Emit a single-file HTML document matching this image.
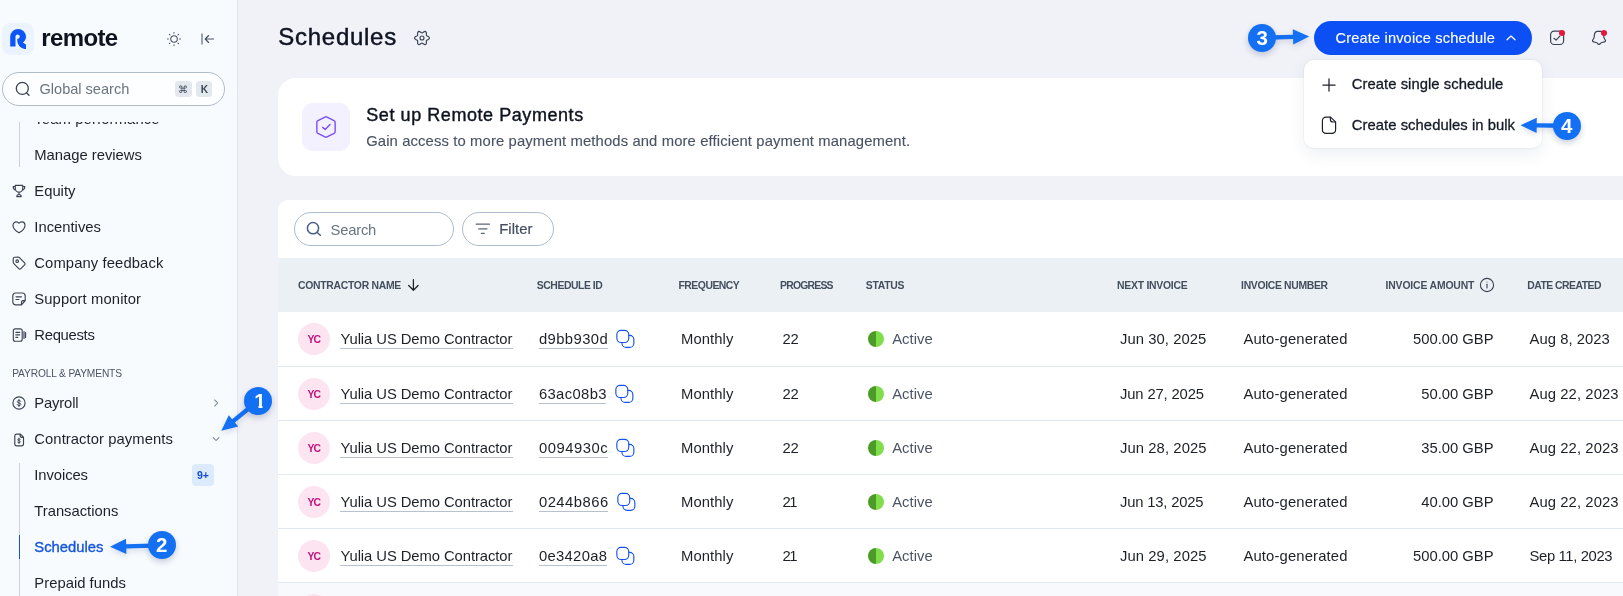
<!DOCTYPE html>
<html lang="en"><head><meta charset="utf-8"><title>Schedules</title>
<style>
*{box-sizing:border-box;margin:0;padding:0}
html,body{width:1623px;height:596px;overflow:hidden;background:#f1f2f8}
body{font-family:"Liberation Sans",sans-serif;position:relative}
#w{position:absolute;left:0;top:0;width:1623px;height:596px;overflow:hidden;will-change:transform}
.t{position:absolute;white-space:pre}
.a{position:absolute}
svg{position:absolute;overflow:visible}
#side{position:absolute;left:0;top:0;width:237px;height:596px;background:#f8fbfe}
#sideb{position:absolute;left:236.700px;top:0;width:1.300px;height:596px;background:#dfe5ec}
#nav{position:absolute;left:0;top:121.5px;width:237px;height:475px;overflow:hidden}
#nav>div{position:absolute;left:0;top:-121.5px;width:237px;height:596px}
.kbd{position:absolute;background:#e3e8ef;border-radius:3.5px}
.card{position:absolute;background:#fff}
.pill{position:absolute;border:1px solid #afbccd;border-radius:17px;background:#fff}
.hl{position:absolute;height:1px;background:#e2e8f0}
.ul{position:absolute;height:1px;background:#b7c0cd}
.av{position:absolute;width:32px;height:32px;border-radius:16px;background:#fce4f1}
.badge{position:absolute;width:28.1px;height:28.1px;border-radius:15px;background:#1470f2;box-shadow:0 3px 6px rgba(20,40,90,.22)}
</style></head>
<body>
<div id="w">
<div id="side"></div><div id="sideb"></div>
<div class="a" style="left:2px;top:23px;width:32.4px;height:32px;border-radius:8.5px;background:#ebf3fe"></div>
<svg style="left:0;top:0" width="60" height="60" viewBox="0 0 60 60"><path fill="#0d55f5" d="M10.2 46.6V36.8a7.9 7.9 0 0 1 15.8 0c0 2.600-1.300 4.500-3.200 5.600L26 44.600V49l-1.600-.1c-2.600-.6-4.700-2.100-5.900-4.200-.9-1.500-1.200-3-1.200-4.200V38.720A2.150 2.150 0 1 0 15.500 36.600V46.600Z"/></svg>
<span class="t" style="left:41.30px;top:27.50px;font-size:24px;line-height:20px;color:#0e1320;font-weight:700;letter-spacing:-0.626px;">remote</span>
<svg style="left:165px;top:30px" width="18" height="18" viewBox="0 0 18 18" fill="none" stroke="#465060" stroke-width="1.05" stroke-linecap="round"><circle cx="9" cy="9" r="3.3"/><path d="M14.70 9.00L15.50 9.00"/><path d="M13.03 13.03L13.60 13.60"/><path d="M9.00 14.70L9.00 15.50"/><path d="M4.97 13.03L4.40 13.60"/><path d="M3.30 9.00L2.50 9.00"/><path d="M4.97 4.97L4.40 4.40"/><path d="M9.00 3.30L9.00 2.50"/><path d="M13.03 4.97L13.60 4.40"/></svg>
<svg style="left:198px;top:30px" width="18" height="18" viewBox="0 0 18 18" fill="none" stroke="#465060" stroke-width="1.150" stroke-linecap="round" stroke-linejoin="round"><path d="M4 3.400V14.600" stroke="#8a94a2" stroke-width="1.700" stroke-linecap="butt"/><path d="M15.600 9H7.400M10.600 5.500L7.200 9l3.400 3.500"/></svg>
<div class="pill" style="left:2px;top:72px;width:223px;height:34px;border-color:#b1bccb;background:#fdfeff"></div>
<svg style="left:14px;top:80px" width="18" height="18" viewBox="0 0 18 18" fill="none" stroke="#3a4352" stroke-width="1.3" stroke-linecap="round"><circle cx="8.300" cy="8.400" r="6"/><path d="M12.700 13l2.300 2.300"/></svg>
<span class="t" style="left:39.50px;top:79.00px;font-size:14.6px;line-height:20px;color:#6a757f;letter-spacing:-0.021px;">Global search</span>
<div class="kbd" style="left:175.2px;top:81px;width:16.5px;height:15.600px"></div>
<div class="kbd" style="left:196.300px;top:81px;width:15.600px;height:15.600px"></div>
<span class="t" style="left:178.30px;top:79.50px;font-size:10px;line-height:20px;color:#3d4757;font-family:"DejaVu Sans",sans-serif;transform:scale(.92,1.12);transform-origin:50% 78%;-webkit-text-stroke:.25px #3d4757;">⌘</span>
<span class="t" style="left:200.70px;top:79.50px;font-size:10.2px;line-height:20px;color:#3d4757;font-weight:700;">K</span>
<div id="nav"><div>
<div class="a" style="left:19px;top:110px;width:1px;height:56.700px;background:#c9d2de"></div>
<span class="t" style="left:34.30px;top:109.00px;font-size:14.8px;line-height:20px;color:#1d212a;letter-spacing:0.122px;">Team performance</span>
<span class="t" style="left:34.30px;top:145.00px;font-size:14.8px;line-height:20px;color:#1d212a;letter-spacing:-0.012px;">Manage reviews</span>
<span class="t" style="left:34.30px;top:181.00px;font-size:14.8px;line-height:20px;color:#1d212a;">Equity</span>
<span class="t" style="left:34.30px;top:217.00px;font-size:14.8px;line-height:20px;color:#1d212a;">Incentives</span>
<span class="t" style="left:34.30px;top:253.00px;font-size:14.8px;line-height:20px;color:#1d212a;letter-spacing:0.100px;">Company feedback</span>
<span class="t" style="left:34.30px;top:289.00px;font-size:14.8px;line-height:20px;color:#1d212a;letter-spacing:0.101px;">Support monitor</span>
<span class="t" style="left:34.30px;top:325.00px;font-size:14.8px;line-height:20px;color:#1d212a;letter-spacing:-0.288px;">Requests</span>
<span class="t" style="left:34.30px;top:393.00px;font-size:14.8px;line-height:20px;color:#1d212a;letter-spacing:-0.156px;">Payroll</span>
<span class="t" style="left:34.30px;top:429.00px;font-size:14.8px;line-height:20px;color:#1d212a;letter-spacing:0.064px;">Contractor payments</span>
<span class="t" style="left:34.30px;top:465.00px;font-size:14.8px;line-height:20px;color:#1d212a;letter-spacing:-0.085px;">Invoices</span>
<span class="t" style="left:34.30px;top:501.00px;font-size:14.8px;line-height:20px;color:#1d212a;letter-spacing:-0.016px;">Transactions</span>
<span class="t" style="left:34.30px;top:573.00px;font-size:14.8px;line-height:20px;color:#1d212a;letter-spacing:0.024px;">Prepaid funds</span>
<span class="t" style="left:34.30px;top:537.00px;font-size:14.8px;line-height:20px;color:#1554dc;-webkit-text-stroke:0.35px #1554dc;">Schedules</span>
<span class="t" style="left:12.20px;top:363.50px;font-size:10.2px;line-height:20px;color:#4b5565;letter-spacing:-0.135px;">PAYROLL &amp; PAYMENTS</span>
<div class="a" style="left:19px;top:462.600px;width:1px;height:140px;background:#c9d2de"></div>
<div class="a" style="left:18.600px;top:535px;width:1.800px;height:23.600px;background:#1554dc"></div>
<div class="a" style="left:192px;top:464px;width:22px;height:22px;border-radius:4px;background:#dbeafc"></div>
<span class="t" style="left:197.00px;top:465.00px;font-size:10.5px;line-height:20px;color:#1749d6;font-weight:700;letter-spacing:0.016px;">9+</span>
<svg style="left:210px;top:397px" width="12" height="12" viewBox="0 0 12 12" fill="none" stroke="#768191" stroke-width="1.050" stroke-linecap="round" stroke-linejoin="round"><path d="M4.650 2.950L7.750 6 4.650 9.050"/></svg>
<svg style="left:210px;top:433px" width="12" height="12" viewBox="0 0 12 12" fill="none" stroke="#768191" stroke-width="1.050" stroke-linecap="round" stroke-linejoin="round"><path d="M3.250 4.650L6.100 7.500 8.950 4.650"/></svg>
<svg style="left:10px;top:182px" width="18" height="18" viewBox="0 0 18 18" fill="none" stroke="#3a4352" stroke-width="1.15" stroke-linecap="round" stroke-linejoin="round"><path d="M5.300 3.300h7.400v3.200a3.700 3.700 0 0 1-7.400 0zM5.300 4.500H3.200c0 2 .8 3.300 2.400 3.500M12.700 4.500h2.100c0 2-.8 3.300-2.400 3.500M9 10.200v2.300M6.800 14.600c0-1.200 1-2.100 2.200-2.100s2.200.9 2.200 2.100z"/></svg>
<svg style="left:10px;top:218px" width="18" height="18" viewBox="0 0 18 18" fill="none" stroke="#3a4352" stroke-width="1.15" stroke-linecap="round" stroke-linejoin="round"><path d="M9 14.800C5.500 12.600 3 10.300 3 7.400 3 5.300 4.500 3.800 6.300 3.800c1.100 0 2.100.6 2.700 1.500.6-.9 1.600-1.500 2.700-1.500 1.800 0 3.300 1.500 3.300 3.600 0 2.900-2.500 5.200-6 7.400z"/></svg>
<svg style="left:10px;top:254px" width="18" height="18" viewBox="0 0 18 18" fill="none" stroke="#3a4352" stroke-width="1.15" stroke-linecap="round" stroke-linejoin="round"><path d="M3.200 8.300V4.700c0-.8.700-1.500 1.500-1.500h3.600c.4 0 .8.200 1.100.4l5.200 5.200c.6.600.6 1.500 0 2.100l-3.700 3.700c-.6.600-1.500.6-2.100 0L3.600 9.400c-.3-.3-.4-.7-.4-1.100z"/><circle cx="7.200" cy="7.200" r="1.300"/></svg>
<svg style="left:10px;top:290px" width="18" height="18" viewBox="0 0 18 18" fill="none" stroke="#3a4352" stroke-width="1.15" stroke-linecap="round" stroke-linejoin="round"><path d="M5.800 3h6.400C14 3 15.200 4.200 15.200 6v4.500l-3.700 4.300H5.800C4 14.800 2.800 13.600 2.800 11.800V6C2.800 4.200 4 3 5.800 3zM15 10.600h-2c-.9 0-1.500.6-1.500 1.500v2.500M6 6.800h5.500M6 9.500h3"/></svg>
<svg style="left:10px;top:326px" width="18" height="18" viewBox="0 0 18 18" fill="none" stroke="#3a4352" stroke-width="1.15" stroke-linecap="round" stroke-linejoin="round"><path d="M5.300 2.800h4.900c1.200 0 2 .8 2 2v8.400c0 1.200-.8 2-2 2H5.300c-1.200 0-2-.8-2-2V4.800c0-1.200.8-2 2-2zM5.800 6.300h3.900M5.800 8.800h3.900M5.800 11.300h2M14 5.500v7M15.600 6.500v5"/></svg>
<svg style="left:10px;top:394px" width="18" height="18" viewBox="0 0 18 18" fill="none" stroke="#3a4352" stroke-width="1.15" stroke-linecap="round" stroke-linejoin="round"><circle cx="9" cy="9" r="6.100"/><path d="M10.700 7.300c-.3-.6-.9-.9-1.700-.9-1 0-1.700.5-1.700 1.300 0 1.700 3.500.8 3.500 2.600 0 .8-.8 1.300-1.800 1.300-.9 0-1.600-.4-1.800-1M9 5.500v7" stroke-width="1"/></svg>
<svg style="left:10px;top:430.5px" width="18" height="18" viewBox="0 0 18 18" fill="none" stroke="#3a4352" stroke-width="1.15" stroke-linecap="round" stroke-linejoin="round"><path d="M6.900 3.100h3.500l3.100 3v6.600c0 1.300-.8 2.100-2.100 2.100H6.900c-1.300 0-2.100-.8-2.100-2.100V5.200c0-1.300.8-2.100 2.100-2.100zM10.200 3.300v1.800c0 .8.500 1.300 1.300 1.300h1.800"/><path d="M10.200 8.500c-.2-.4-.7-.7-1.200-.7-.8 0-1.300.4-1.300 1 0 1.300 2.600.6 2.600 2 0 .6-.6 1-1.300 1-.7 0-1.200-.3-1.400-.8M9 7v5.600" stroke-width=".9"/></svg>
</div></div>
<span class="t" style="left:278.30px;top:26.50px;font-size:24px;line-height:20px;color:#0e1320;letter-spacing:0.728px;-webkit-text-stroke:0.45px #0e1320;">Schedules</span>
<svg style="left:412.900px;top:29px" width="18" height="18" viewBox="0 0 18 18" fill="none" stroke="#3a4352" stroke-width="1.150" stroke-linejoin="round"><path d="M16.40 9.00L16.22 9.63L15.72 10.19L15.04 10.62L14.33 10.94L13.76 11.22L13.42 11.55L13.30 12.01L13.35 12.65L13.42 13.42L13.39 14.23L13.16 14.94L12.70 15.41L12.06 15.57L11.33 15.41L10.62 15.04L9.99 14.59L9.46 14.23L9.00 14.10L8.54 14.23L8.01 14.59L7.38 15.04L6.67 15.41L5.94 15.57L5.30 15.41L4.84 14.94L4.61 14.23L4.58 13.42L4.65 12.65L4.70 12.01L4.58 11.55L4.24 11.22L3.67 10.94L2.96 10.62L2.28 10.19L1.78 9.63L1.60 9.00L1.78 8.37L2.28 7.81L2.96 7.38L3.67 7.06L4.24 6.78L4.58 6.45L4.70 5.99L4.65 5.35L4.58 4.58L4.61 3.77L4.84 3.06L5.30 2.59L5.94 2.43L6.67 2.59L7.38 2.96L8.01 3.41L8.54 3.77L9.00 3.90L9.46 3.77L9.99 3.41L10.62 2.96L11.33 2.59L12.06 2.43L12.70 2.59L13.16 3.06L13.39 3.77L13.42 4.58L13.35 5.35L13.30 5.99L13.42 6.45L13.76 6.78L14.33 7.06L15.04 7.38L15.72 7.81L16.22 8.37Z"/><circle cx="9" cy="9" r="2"/></svg>
<div class="a" style="left:1314px;top:21px;width:218px;height:34px;border-radius:17px;background:#0c50f5"></div>
<span class="t" style="left:1335.50px;top:28.00px;font-size:14.6px;line-height:20px;color:#fff;letter-spacing:0.161px;-webkit-text-stroke:0.12px #fff;">Create invoice schedule</span>
<svg style="left:1505px;top:32px" width="12" height="12" viewBox="0 0 12 12" fill="none" stroke="#fff" stroke-width="1.300" stroke-linecap="round" stroke-linejoin="round"><path d="M2 7.800L6 4.100l4 3.700"/></svg>
<svg style="left:1548px;top:29px" width="18" height="18" viewBox="1548 29 18 18" fill="none" stroke="#3a4352" stroke-width="1.200" stroke-linecap="round" stroke-linejoin="round"><rect x="1550.600" y="31.200" width="13" height="13.300" rx="3.600"/><path d="M1553.900 38.300l2.200 1.800 3.700-3.900"/></svg>
<div class="a" style="left:1559px;top:29.800px;width:6.200px;height:6.200px;border-radius:4px;background:#e8153d"></div>
<svg style="left:1590px;top:29px" width="18" height="18" viewBox="1590 29 18 18" fill="none" stroke="#3a4352" stroke-width="1.200" stroke-linecap="round" stroke-linejoin="round"><path d="M1599 31.200c-3 0-4.700 2-4.700 4.800 0 1.800-.5 2.800-1.300 3.600-.9.900-.5 2 .6 2.300l2.500.6c.8.200 1.200.6 1.600 1.200.6.900 2 .9 2.600 0 .4-.6.800-1 1.600-1.200l2.500-.6c1.100-.3 1.500-1.400.6-2.300-.8-.8-1.300-1.800-1.300-3.600 0-2.800-1.700-4.800-4.700-4.800z"/></svg>
<div class="a" style="left:1601px;top:29.800px;width:6.200px;height:6.200px;border-radius:4px;background:#e8153d"></div>
<div class="card" style="left:278px;top:78px;width:1400px;height:98px;border-radius:18px"></div>
<div class="a" style="left:302px;top:103px;width:48px;height:48px;border-radius:11px;background:#f3f0ff"></div>
<svg style="left:314px;top:113.650px" width="24" height="26" viewBox="0 0 24 26" fill="none" stroke="#7b4ff7" stroke-width="1.400" stroke-linecap="round" stroke-linejoin="round"><path d="M11 3.050Q12 2.550 13 3.050L20.050 6.650Q21.150 7.200 21.150 8.450V17.500Q21.150 18.750 20.050 19.350L13 22.950Q12 23.450 11 22.950L3.950 19.350Q2.850 18.750 2.850 17.500V8.450Q2.850 7.200 3.950 6.650Z"/><path d="M8.700 13.350l2.500 2.200 4.800-5.100"/></svg>
<span class="t" style="left:366.30px;top:105.00px;font-size:18px;line-height:20px;color:#0e1320;letter-spacing:0.561px;-webkit-text-stroke:0.4px #0e1320;">Set up Remote Payments</span>
<span class="t" style="left:366.20px;top:131.00px;font-size:14.8px;line-height:20px;color:#485263;letter-spacing:0.130px;-webkit-text-stroke:0.12px #485263;">Gain access to more payment methods and more efficient payment management.</span>
<div class="card" style="left:278px;top:200px;width:1400px;height:420px;border-radius:10px"></div>
<div class="pill" style="left:294px;top:212px;width:160px;height:34px"></div>
<svg style="left:304px;top:219px" width="20" height="20" viewBox="0 0 20 20" fill="none" stroke="#4a5f85" stroke-width="1.500" stroke-linecap="round"><circle cx="9" cy="9.200" r="5.600"/><path d="M13.200 13.500l3.100 2.800"/></svg>
<span class="t" style="left:330.50px;top:220.00px;font-size:14.8px;line-height:20px;color:#6a757f;letter-spacing:-0.218px;">Search</span>
<div class="pill" style="left:462px;top:212px;width:92px;height:34px"></div>
<svg style="left:474px;top:220px" width="18" height="18" viewBox="0 0 18 18" fill="none" stroke="#5a6576" stroke-width="1.200" stroke-linecap="round"><path d="M2.200 4.200h13.200M4.700 8.800h8.300M7.300 13.300h3"/></svg>
<span class="t" style="left:499.20px;top:219.00px;font-size:14.8px;line-height:20px;color:#434e5f;letter-spacing:0.082px;-webkit-text-stroke:0.2px #434e5f;">Filter</span>
<div class="a" style="left:278px;top:258px;width:1400px;height:54px;background:#ebf0f4"></div>
<span class="t" style="left:298.10px;top:275.50px;font-size:10.4px;line-height:20px;color:#434e5e;font-weight:700;letter-spacing:-0.292px;">CONTRACTOR NAME</span>
<span class="t" style="left:536.80px;top:275.50px;font-size:10.4px;line-height:20px;color:#434e5e;font-weight:700;letter-spacing:-0.444px;">SCHEDULE ID</span>
<span class="t" style="left:678.50px;top:275.50px;font-size:10.4px;line-height:20px;color:#434e5e;font-weight:700;letter-spacing:-0.494px;">FREQUENCY</span>
<span class="t" style="left:780.00px;top:275.50px;font-size:10.4px;line-height:20px;color:#434e5e;font-weight:700;letter-spacing:-0.772px;">PROGRESS</span>
<span class="t" style="left:865.80px;top:275.50px;font-size:10.4px;line-height:20px;color:#434e5e;font-weight:700;letter-spacing:-0.266px;">STATUS</span>
<span class="t" style="left:1117.10px;top:275.50px;font-size:10.4px;line-height:20px;color:#434e5e;font-weight:700;letter-spacing:-0.257px;">NEXT INVOICE</span>
<span class="t" style="left:1241.10px;top:275.50px;font-size:10.4px;line-height:20px;color:#434e5e;font-weight:700;letter-spacing:-0.325px;">INVOICE NUMBER</span>
<span class="t" style="left:1385.50px;top:275.50px;font-size:10.4px;line-height:20px;color:#434e5e;font-weight:700;letter-spacing:-0.148px;">INVOICE AMOUNT</span>
<span class="t" style="left:1527.30px;top:275.50px;font-size:10.4px;line-height:20px;color:#434e5e;font-weight:700;letter-spacing:-0.524px;">DATE CREATED</span>
<svg style="left:406.500px;top:278px" width="14" height="14" viewBox="0 0 14 14" fill="none" stroke="#1d212a" stroke-width="1.250" stroke-linecap="round" stroke-linejoin="round"><path d="M6.400 1.600v10.600M1.700 7.500l4.700 4.800 4.700-4.800"/></svg>
<svg style="left:1479px;top:277px" width="16" height="16" viewBox="0 0 16 16" fill="none" stroke="#3a4352" stroke-width="1.100" stroke-linecap="round"><circle cx="8" cy="8" r="6.600"/><path d="M8 7.300v3.700"/><circle cx="8" cy="5" r=".5" fill="#3a4352" stroke="none"/></svg>
<div class="av" style="left:298px;top:323px"></div>
<span class="t" style="left:307.60px;top:329.50px;font-size:10.4px;line-height:20px;color:#c2127a;font-weight:700;letter-spacing:-0.938px;">YC</span>
<span class="t" style="left:340.50px;top:329.00px;font-size:14.8px;line-height:20px;color:#1d2027;letter-spacing:-0.071px;">Yulia US Demo Contractor</span>
<div class="ul" style="left:340.300px;top:348px;width:172.300px"></div>
<span class="t" style="left:538.90px;top:329.00px;font-size:14.8px;line-height:20px;color:#1d2027;letter-spacing:0.422px;">d9bb930d</span>
<div class="ul" style="left:538.800px;top:348px;width:68.9px"></div>
<svg style="left:616.2px;top:329.0px" width="20" height="20" viewBox="0 0 20 20" fill="none" stroke="#1552f0" stroke-width="1.150" stroke-linejoin="round"><rect x=".85" y="1.350" width="11.900" height="12.100" rx="4.200"/><path d="M12.750 6.350h.9a4.200 4.200 0 0 1 4.200 4.200v3.600a4.200 4.200 0 0 1-4.200 4.200h-3.500a4.200 4.200 0 0 1-4.200-4.200v-.7"/></svg>
<span class="t" style="left:681.00px;top:329.00px;font-size:14.8px;line-height:20px;color:#1d2027;letter-spacing:0.098px;">Monthly</span>
<span class="t" style="left:782.50px;top:329.00px;font-size:14.8px;line-height:20px;color:#1d2027;letter-spacing:-0.169px;">22</span>
<div class="a" style="left:867.800px;top:330.8px;width:16.400px;height:16.400px;border-radius:9px;background:linear-gradient(90deg,#4c9a27 0,#4c9a27 50%,#80de4a 50%)"></div>
<span class="t" style="left:892.20px;top:329.00px;font-size:14.8px;line-height:20px;color:#4b5565;letter-spacing:0.061px;">Active</span>
<span class="t" style="left:1120.00px;top:329.00px;font-size:14.8px;line-height:20px;color:#1d2027;letter-spacing:0.066px;">Jun 30, 2025</span>
<span class="t" style="left:1243.40px;top:329.00px;font-size:14.8px;line-height:20px;color:#1d2027;letter-spacing:0.160px;">Auto-generated</span>
<span class="t" style="left:1412.97px;top:329.00px;font-size:14.8px;line-height:20px;color:#1d2027;">500.00 GBP</span>
<span class="t" style="left:1529.50px;top:329.00px;font-size:14.8px;line-height:20px;color:#1d2027;letter-spacing:0.049px;">Aug 8, 2023</span>
<div class="hl" style="left:278px;top:366px;width:1400px"></div>
<div class="av" style="left:298px;top:378.1px"></div>
<span class="t" style="left:307.60px;top:384.50px;font-size:10.4px;line-height:20px;color:#c2127a;font-weight:700;letter-spacing:-0.938px;">YC</span>
<span class="t" style="left:340.50px;top:384.00px;font-size:14.8px;line-height:20px;color:#1d2027;letter-spacing:-0.071px;">Yulia US Demo Contractor</span>
<div class="ul" style="left:340.300px;top:403.1px;width:172.300px"></div>
<span class="t" style="left:538.90px;top:384.00px;font-size:14.8px;line-height:20px;color:#1d2027;letter-spacing:0.369px;">63ac08b3</span>
<div class="ul" style="left:538.800px;top:403.1px;width:67.7px"></div>
<svg style="left:615.0px;top:384.1px" width="20" height="20" viewBox="0 0 20 20" fill="none" stroke="#1552f0" stroke-width="1.150" stroke-linejoin="round"><rect x=".85" y="1.350" width="11.900" height="12.100" rx="4.200"/><path d="M12.750 6.350h.9a4.200 4.200 0 0 1 4.200 4.200v3.600a4.200 4.200 0 0 1-4.200 4.200h-3.500a4.200 4.200 0 0 1-4.200-4.200v-.7"/></svg>
<span class="t" style="left:681.00px;top:384.00px;font-size:14.8px;line-height:20px;color:#1d2027;letter-spacing:0.098px;">Monthly</span>
<span class="t" style="left:782.50px;top:384.00px;font-size:14.8px;line-height:20px;color:#1d2027;letter-spacing:-0.169px;">22</span>
<div class="a" style="left:867.800px;top:385.90000000000003px;width:16.400px;height:16.400px;border-radius:9px;background:linear-gradient(90deg,#4c9a27 0,#4c9a27 50%,#80de4a 50%)"></div>
<span class="t" style="left:892.20px;top:384.00px;font-size:14.8px;line-height:20px;color:#4b5565;letter-spacing:0.061px;">Active</span>
<span class="t" style="left:1120.00px;top:384.00px;font-size:14.8px;line-height:20px;color:#1d2027;letter-spacing:-0.143px;">Jun 27, 2025</span>
<span class="t" style="left:1243.40px;top:384.00px;font-size:14.8px;line-height:20px;color:#1d2027;letter-spacing:0.160px;">Auto-generated</span>
<span class="t" style="left:1421.21px;top:384.00px;font-size:14.8px;line-height:20px;color:#1d2027;">50.00 GBP</span>
<span class="t" style="left:1529.50px;top:384.00px;font-size:14.8px;line-height:20px;color:#1d2027;letter-spacing:0.087px;">Aug 22, 2023</span>
<div class="hl" style="left:278px;top:420px;width:1400px"></div>
<div class="av" style="left:298px;top:432.1px"></div>
<span class="t" style="left:307.60px;top:438.50px;font-size:10.4px;line-height:20px;color:#c2127a;font-weight:700;letter-spacing:-0.938px;">YC</span>
<span class="t" style="left:340.50px;top:438.00px;font-size:14.8px;line-height:20px;color:#1d2027;letter-spacing:-0.071px;">Yulia US Demo Contractor</span>
<div class="ul" style="left:340.300px;top:457.1px;width:172.300px"></div>
<span class="t" style="left:538.90px;top:438.00px;font-size:14.8px;line-height:20px;color:#1d2027;letter-spacing:0.541px;">0094930c</span>
<div class="ul" style="left:538.800px;top:457.1px;width:68.9px"></div>
<svg style="left:616.2px;top:438.1px" width="20" height="20" viewBox="0 0 20 20" fill="none" stroke="#1552f0" stroke-width="1.150" stroke-linejoin="round"><rect x=".85" y="1.350" width="11.900" height="12.100" rx="4.200"/><path d="M12.750 6.350h.9a4.200 4.200 0 0 1 4.200 4.200v3.600a4.200 4.200 0 0 1-4.200 4.200h-3.500a4.200 4.200 0 0 1-4.200-4.200v-.7"/></svg>
<span class="t" style="left:681.00px;top:438.00px;font-size:14.8px;line-height:20px;color:#1d2027;letter-spacing:0.098px;">Monthly</span>
<span class="t" style="left:782.50px;top:438.00px;font-size:14.8px;line-height:20px;color:#1d2027;letter-spacing:-0.169px;">22</span>
<div class="a" style="left:867.800px;top:439.90000000000003px;width:16.400px;height:16.400px;border-radius:9px;background:linear-gradient(90deg,#4c9a27 0,#4c9a27 50%,#80de4a 50%)"></div>
<span class="t" style="left:892.20px;top:438.00px;font-size:14.8px;line-height:20px;color:#4b5565;letter-spacing:0.061px;">Active</span>
<span class="t" style="left:1120.00px;top:438.00px;font-size:14.8px;line-height:20px;color:#1d2027;letter-spacing:0.084px;">Jun 28, 2025</span>
<span class="t" style="left:1243.40px;top:438.00px;font-size:14.8px;line-height:20px;color:#1d2027;letter-spacing:0.160px;">Auto-generated</span>
<span class="t" style="left:1421.21px;top:438.00px;font-size:14.8px;line-height:20px;color:#1d2027;">35.00 GBP</span>
<span class="t" style="left:1529.50px;top:438.00px;font-size:14.8px;line-height:20px;color:#1d2027;letter-spacing:0.087px;">Aug 22, 2023</span>
<div class="hl" style="left:278px;top:474px;width:1400px"></div>
<div class="av" style="left:298px;top:486.1px"></div>
<span class="t" style="left:307.60px;top:492.50px;font-size:10.4px;line-height:20px;color:#c2127a;font-weight:700;letter-spacing:-0.938px;">YC</span>
<span class="t" style="left:340.50px;top:492.00px;font-size:14.8px;line-height:20px;color:#1d2027;letter-spacing:-0.071px;">Yulia US Demo Contractor</span>
<div class="ul" style="left:340.300px;top:511.1px;width:172.300px"></div>
<span class="t" style="left:538.90px;top:492.00px;font-size:14.8px;line-height:20px;color:#1d2027;letter-spacing:0.508px;">0244b866</span>
<div class="ul" style="left:538.800px;top:511.1px;width:69.5px"></div>
<svg style="left:616.8px;top:492.1px" width="20" height="20" viewBox="0 0 20 20" fill="none" stroke="#1552f0" stroke-width="1.150" stroke-linejoin="round"><rect x=".85" y="1.350" width="11.900" height="12.100" rx="4.200"/><path d="M12.750 6.350h.9a4.200 4.200 0 0 1 4.200 4.200v3.600a4.200 4.200 0 0 1-4.200 4.200h-3.500a4.200 4.200 0 0 1-4.200-4.200v-.7"/></svg>
<span class="t" style="left:681.00px;top:492.00px;font-size:14.8px;line-height:20px;color:#1d2027;letter-spacing:0.098px;">Monthly</span>
<span class="t" style="left:782.50px;top:492.00px;font-size:14.8px;line-height:20px;color:#1d2027;letter-spacing:-1.469px;">21</span>
<div class="a" style="left:867.800px;top:493.90000000000003px;width:16.400px;height:16.400px;border-radius:9px;background:linear-gradient(90deg,#4c9a27 0,#4c9a27 50%,#80de4a 50%)"></div>
<span class="t" style="left:892.20px;top:492.00px;font-size:14.8px;line-height:20px;color:#4b5565;letter-spacing:0.061px;">Active</span>
<span class="t" style="left:1120.00px;top:492.00px;font-size:14.8px;line-height:20px;color:#1d2027;letter-spacing:-0.189px;">Jun 13, 2025</span>
<span class="t" style="left:1243.40px;top:492.00px;font-size:14.8px;line-height:20px;color:#1d2027;letter-spacing:0.160px;">Auto-generated</span>
<span class="t" style="left:1421.21px;top:492.00px;font-size:14.8px;line-height:20px;color:#1d2027;">40.00 GBP</span>
<span class="t" style="left:1529.50px;top:492.00px;font-size:14.8px;line-height:20px;color:#1d2027;letter-spacing:0.087px;">Aug 22, 2023</span>
<div class="hl" style="left:278px;top:528px;width:1400px"></div>
<div class="av" style="left:298px;top:540.1px"></div>
<span class="t" style="left:307.60px;top:546.50px;font-size:10.4px;line-height:20px;color:#c2127a;font-weight:700;letter-spacing:-0.938px;">YC</span>
<span class="t" style="left:340.50px;top:546.00px;font-size:14.8px;line-height:20px;color:#1d2027;letter-spacing:-0.071px;">Yulia US Demo Contractor</span>
<div class="ul" style="left:340.300px;top:565.1px;width:172.300px"></div>
<span class="t" style="left:538.90px;top:546.00px;font-size:14.8px;line-height:20px;color:#1d2027;letter-spacing:0.322px;">0e3420a8</span>
<div class="ul" style="left:538.800px;top:565.1px;width:68.2px"></div>
<svg style="left:615.5px;top:546.1px" width="20" height="20" viewBox="0 0 20 20" fill="none" stroke="#1552f0" stroke-width="1.150" stroke-linejoin="round"><rect x=".85" y="1.350" width="11.900" height="12.100" rx="4.200"/><path d="M12.750 6.350h.9a4.200 4.200 0 0 1 4.200 4.200v3.600a4.200 4.200 0 0 1-4.200 4.200h-3.500a4.200 4.200 0 0 1-4.200-4.200v-.7"/></svg>
<span class="t" style="left:681.00px;top:546.00px;font-size:14.8px;line-height:20px;color:#1d2027;letter-spacing:0.098px;">Monthly</span>
<span class="t" style="left:782.50px;top:546.00px;font-size:14.8px;line-height:20px;color:#1d2027;letter-spacing:-1.469px;">21</span>
<div class="a" style="left:867.800px;top:547.9px;width:16.400px;height:16.400px;border-radius:9px;background:linear-gradient(90deg,#4c9a27 0,#4c9a27 50%,#80de4a 50%)"></div>
<span class="t" style="left:892.20px;top:546.00px;font-size:14.8px;line-height:20px;color:#4b5565;letter-spacing:0.061px;">Active</span>
<span class="t" style="left:1120.00px;top:546.00px;font-size:14.8px;line-height:20px;color:#1d2027;letter-spacing:0.084px;">Jun 29, 2025</span>
<span class="t" style="left:1243.40px;top:546.00px;font-size:14.8px;line-height:20px;color:#1d2027;letter-spacing:0.160px;">Auto-generated</span>
<span class="t" style="left:1412.97px;top:546.00px;font-size:14.8px;line-height:20px;color:#1d2027;">500.00 GBP</span>
<span class="t" style="left:1529.50px;top:546.00px;font-size:14.8px;line-height:20px;color:#1d2027;letter-spacing:-0.359px;">Sep 11, 2023</span>
<div class="hl" style="left:278px;top:582px;width:1400px"></div>
<div class="a" style="left:278px;top:583px;width:1400px;height:20px;background:#f8f9fc"></div>
<div class="av" style="left:298px;top:593.500px"></div>
<div class="a" style="left:1304px;top:60px;width:238px;height:88px;border-radius:10px;background:#fff;box-shadow:0 6px 16px rgba(30,45,80,.08),0 0 0 1px rgba(30,45,80,.035)"></div>
<svg style="left:1320px;top:75.500px" width="18" height="18" viewBox="0 0 18 18" fill="none" stroke="#1d212a" stroke-width="1.250" stroke-linecap="round"><path d="M9 2.900v12.200M2.900 9h12.200"/></svg>
<span class="t" style="left:1351.80px;top:74.00px;font-size:14.8px;line-height:20px;color:#141a26;letter-spacing:0.046px;-webkit-text-stroke:0.3px #141a26;">Create single schedule</span>
<svg style="left:1320px;top:114.500px" width="18" height="20" viewBox="0 0 18 20" fill="none" stroke="#1d212a" stroke-width="1.200" stroke-linecap="round" stroke-linejoin="round"><path d="M6.200 2.100h4.300l5.100 4.800v7.700c0 2.500-1.300 3.800-3.800 3.800H6.200c-2.500 0-3.800-1.300-3.800-3.800V5.900c0-2.500 1.300-3.800 3.800-3.800z"/><path d="M10.400 2.300v2.100c0 1.700.9 2.600 2.600 2.600h2.400"/></svg>
<span class="t" style="left:1351.80px;top:115.00px;font-size:14.8px;line-height:20px;color:#141a26;letter-spacing:0.050px;-webkit-text-stroke:0.3px #141a26;">Create schedules in bulk</span>
<svg style="left:0;top:0;filter:drop-shadow(0 2px 3px rgba(20,40,90,.18))" width="1623" height="596" viewBox="0 0 1623 596"><g fill="#1470f2"><path d="M1262.0 35.6L1292.9 34.7L1292.8 29.2L1309.2 36.5L1293.2 44.6L1293.1 39.1L1262.2 40.0Z"/><path d="M1566.7 127.9L1536.7 127.6L1536.6 133.1L1520.5 125.3L1536.8 117.7L1536.7 123.2L1566.7 123.5Z"/><path d="M161.9 547.6L126.3 548.6L126.4 554.1L110.0 546.8L126.0 538.7L126.1 544.2L161.7 543.2Z"/><path d="M259.6 402.5L234.9 422.6L238.2 426.6L221.3 430.8L228.8 415.2L232.1 419.2L256.8 399.1Z"/></g></svg>
<div class="badge" style="left:1248.05px;top:23.75px"></div><span class="t" style="left:1256.40px;top:25.50px;font-size:20.5px;line-height:24px;color:#fff;font-weight:700;">3</span>
<div class="badge" style="left:1552.65px;top:111.65px"></div><span class="t" style="left:1561.00px;top:113.50px;font-size:20.5px;line-height:24px;color:#fff;font-weight:700;">4</span>
<div class="badge" style="left:147.75px;top:531.35px"></div><span class="t" style="left:156.10px;top:532.50px;font-size:20.5px;line-height:24px;color:#fff;font-weight:700;">2</span>
<div class="badge" style="left:244.15px;top:386.75px"></div><span class="t" style="left:254.20px;top:388.50px;font-size:20.5px;line-height:24px;color:#fff;font-weight:700;clip-path:polygon(0 0,100% 0,100% 17.2px,8.300px 17.2px,8.300px 100%,4.300px 100%,4.300px 17.2px,0 17.2px);">1</span>
</div>
</body></html>
